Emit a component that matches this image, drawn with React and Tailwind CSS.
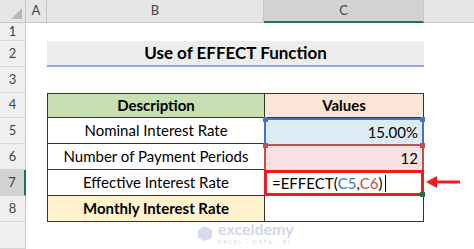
import React from 'react';

const font = { fontFamily: 'Lato, "Open Sans", sans-serif' };

const RowHead = ({ n, row, active }) => (
  <div
    className={`col-start-1 flex items-center justify-center border-b border-[#d6d6d6] text-[13px] text-[#444] ${
      active ? 'bg-[#d2d2d2] border-r-2 border-r-[#217346]' : 'bg-[#efefef] border-r border-r-[#c6c6c6]'
    }`}
    style={{ gridRowStart: row }}
  >
    {n}
  </div>
);

const Handle = ({ className }) => (
  <span className={`absolute h-[5px] w-[5px] ${className}`} />
);

export default function App() {
  return (
    <div
      className="relative grid h-[249px] w-[474px] overflow-hidden bg-white text-black"
      style={{
        ...font,
        gridTemplateColumns: '26px 21px 217px 160px 1fr',
        gridTemplateRows: '23px 18px 26px 26px 25px 26px 26px 26px 26px 1fr',
      }}
    >
      {/* column headers */}
      <div className="relative col-start-1 row-start-1 border-b border-r border-[#c6c6c6] bg-[#e6e6e6]">
        <div
          className="absolute bottom-[3px] right-[3px] h-0 w-0"
          style={{ borderRight: '11px solid #b9b9b9', borderTop: '11px solid transparent' }}
        />
      </div>
      <div className="col-start-2 row-start-1 flex items-center justify-center border-b border-r border-[#c6c6c6] bg-[#e6e6e6] text-[13px] text-[#444]">A</div>
      <div className="col-start-3 row-start-1 flex items-center justify-center border-b border-r border-[#c6c6c6] bg-[#e6e6e6] text-[13px] text-[#444]">B</div>
      <div className="col-start-4 row-start-1 flex items-center justify-center border-b-2 border-r border-b-[#217346] border-r-[#c6c6c6] bg-[#d3d3d3] text-[13px] text-[#444]">C</div>
      <div className="col-start-5 row-start-1 border-b border-[#c6c6c6] bg-[#e6e6e6]" />

      {/* row headers */}
      <RowHead n="1" row={2} />
      <RowHead n="2" row={3} />
      <RowHead n="3" row={4} />
      <RowHead n="4" row={5} />
      <RowHead n="5" row={6} />
      <RowHead n="6" row={7} />
      <RowHead n="7" row={8} active />
      <RowHead n="8" row={9} />
      <RowHead n="" row={10} />

      {/* title */}
      <div className="col-span-2 col-start-3 row-start-3 flex items-center justify-center border-b-2 border-[#8ea9db] bg-[#ededed] text-[17px] font-bold">
        Use of EFFECT Function
      </div>

      {/* table header */}
      <div className="col-start-3 row-start-5 flex items-center justify-center border border-r-0 border-[#333] bg-[#c6e0b4] text-[15px] font-bold">
        Description
      </div>
      <div className="col-start-4 row-start-5 flex items-center justify-center border border-[#333] bg-[#fce4d6] text-[15px] font-bold">
        Values
      </div>

      {/* row 5 */}
      <div className="col-start-3 row-start-6 flex items-center justify-center border-b border-l border-[#333] text-[15px]">
        Nominal Interest Rate
      </div>
      <div className="relative col-start-4 row-start-6 flex items-center justify-end border-x-2 border-t-2 border-[#4472c4] bg-[#ddebf7] pr-[4px] text-[15px]">
        15.00%
        <Handle className="-left-[3px] -top-[3px] bg-[#4472c4]" />
        <Handle className="-right-[3px] -top-[3px] bg-[#4472c4]" />
      </div>

      {/* row 6 */}
      <div className="col-start-3 row-start-7 flex items-center justify-center border-b border-l border-[#333] text-[15px]">
        Number of Payment Periods
      </div>
      <div className="relative col-start-4 row-start-7 flex items-center justify-end border-x-2 border-t-2 border-[#c0504d] bg-[#f9e1e1] pr-[4px] text-[15px]">
        12
        <Handle className="-left-[3px] -top-[3px] bg-[#c0504d]" />
        <Handle className="-right-[3px] -top-[3px] bg-[#c0504d]" />
      </div>

      {/* row 7 */}
      <div className="col-start-3 row-start-8 flex items-center justify-center border-b border-l border-[#333] text-[15px]">
        Effective Interest Rate
      </div>
      <div className="relative col-start-4 row-start-8 flex items-center border-[3px] border-[#ee1c1c] pl-[5px] text-[15px]">
        <span>=EFFECT(</span>
        <span className="text-[#4472c4]">C5</span>
        <span>,</span>
        <span className="text-[#c0504d]">C6</span>
        <span>)</span>
        <span className="ml-[2px] h-[17px] w-[1px] bg-black" />
        <Handle className="-bottom-[4px] -right-[4px] h-[4px] w-[4px] bg-[#217346]" />
      </div>

      {/* row 8 */}
      <div className="col-start-3 row-start-9 flex items-center justify-center border-b border-l border-[#333] bg-[#fff2cc] text-[15px] font-bold">
        Monthly Interest Rate
      </div>
      <div className="col-start-4 row-start-9 border-x border-b border-[#333]" />

      {/* arrow */}
      <svg className="absolute left-[426px] top-[176px]" width="36" height="12" viewBox="0 0 36 12">
        <line x1="8" y1="6" x2="34" y2="6" stroke="#ee1c1c" strokeWidth="3" />
        <polygon points="0,6 11,0 11,12" fill="#ee1c1c" />
      </svg>

      {/* watermark */}
      <div className="absolute left-[196px] top-[220px] flex items-center gap-[4px] opacity-40">
        <svg width="18" height="18" viewBox="0 0 18 18">
          <path d="M2 6 L9 2 L16 6 L16 14 L9 17 L2 14 Z" fill="#9aa9cf" />
        </svg>
        <div className="flex flex-col items-start">
          <span className="text-[16px] font-bold leading-[18px] text-[#8fa0cc]">exceldemy</span>
          <span className="text-[6px] leading-[7px] tracking-[1.5px] text-[#8fa0cc]">EXCEL · DATA · BI</span>
        </div>
      </div>
    </div>
  );
}
